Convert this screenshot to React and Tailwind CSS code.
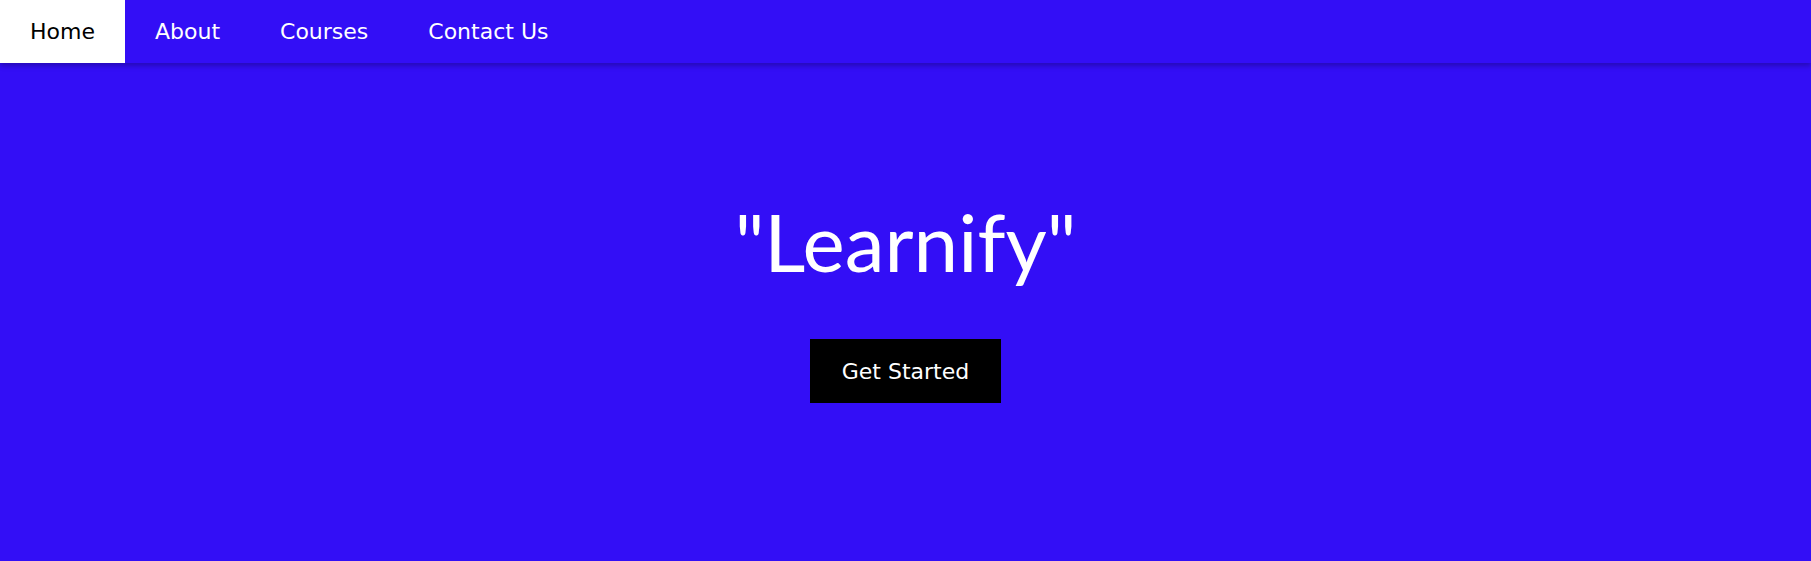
const links = ['Home', 'About', 'Courses', 'Contact Us'];

export default function App() {
  return (
    <div className="min-h-screen bg-[#330ef6] font-['DejaVu_Sans',sans-serif] text-white">
      <nav className="flex h-[63px] items-stretch shadow-[0_3px_5px_rgba(0,0,0,0.25)]">
        {links.map((name, i) => (
          <a
            key={name}
            href="#"
            className={`flex items-center px-[30px] text-[22px] ${i === 0 ? 'bg-white text-black' : 'text-white'}`}
          >
            {name}
          </a>
        ))}
      </nav>

      <section className="flex flex-col items-center pt-[130px]">
        <h1 className="font-['Lato',sans-serif] text-[80px] leading-[1.2]">"Learnify"</h1>
        <button className="mt-[50px] h-[64px] w-[191px] bg-black text-[22px] text-white">
          Get Started
        </button>
      </section>
    </div>
  );
}
